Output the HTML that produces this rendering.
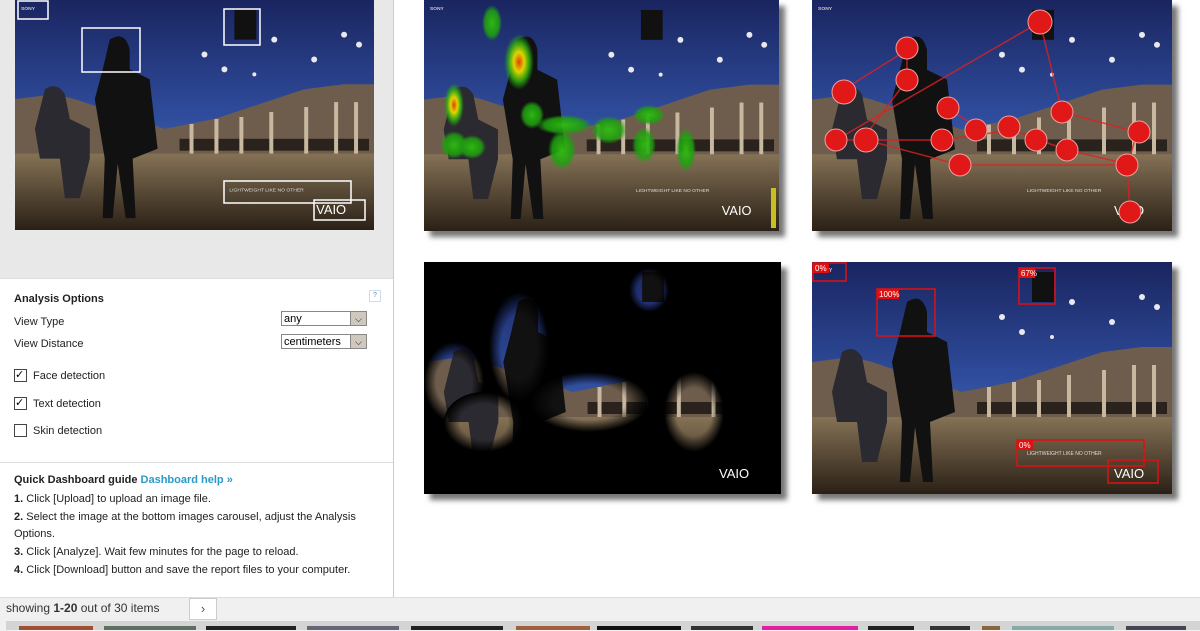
<!DOCTYPE html>
<html><head><style>
body{margin:0;width:1200px;height:630px;overflow:hidden;background:#fff;font-family:"Liberation Sans",Arial,sans-serif;position:relative}
.abs{position:absolute}
.ph{position:absolute;display:block}
.sh{box-shadow:6px 6px 5px #777}
.t{font-size:11px;color:#222}
</style></head><body>
<svg width="0" height="0" style="position:absolute">
<defs>
<linearGradient id="sky" x1="0" y1="0" x2="0" y2="1"><stop offset="0" stop-color="#1a2560"/><stop offset=".5" stop-color="#2f4c9c"/><stop offset="1" stop-color="#5a7dc0"/></linearGradient>
<linearGradient id="gr" x1="0" y1="0" x2="0" y2="1"><stop offset="0" stop-color="#857256"/><stop offset="1" stop-color="#2a2016"/></linearGradient>
<symbol id="photo" viewBox="0 0 360 232" preserveAspectRatio="none">
<rect width="360" height="232" fill="url(#sky)"/>
<path d="M0 100 L40 95 L60 100 L150 130 L200 120 L290 90 L330 85 L360 85 L360 160 L0 160Z" fill="#6e5d4c"/>
<g fill="#2a221c"><rect x="165" y="140" width="190" height="12"/></g>
<g fill="#c8b8a0"><rect x="175" y="125" width="4" height="30"/><rect x="200" y="120" width="4" height="35"/><rect x="225" y="118" width="4" height="37"/><rect x="255" y="113" width="4" height="42"/><rect x="290" y="108" width="4" height="47"/><rect x="320" y="103" width="4" height="52"/><rect x="340" y="103" width="4" height="52"/></g>
<rect y="155" width="360" height="77" fill="url(#gr)"/>
<path d="M30 90 q12-8 20 5 l5 25 l20 10 l0 30 l-10 40 l-15 0 l-5-40 l-20 0 l-5 -30 z" fill="#2a2a30"/>
<path d="M95 40 q15-10 20 10 l0 20 l20 10 l8 70 l-25 10 l3 60 l-10 0 l-8-55 l-5 55 l-10 0 l2-60 l-10-60 l8-30z" fill="#111"/>
<g fill="#e8e8ee"><circle cx="190" cy="55" r="3"/><circle cx="210" cy="70" r="3"/><circle cx="260" cy="40" r="3"/><circle cx="300" cy="60" r="3"/><circle cx="330" cy="35" r="3"/><circle cx="240" cy="75" r="2"/><circle cx="345" cy="45" r="3"/></g>
<rect x="220" y="10" width="22" height="30" fill="#111"/>
<text x="302" y="216" fill="#fff" font-size="13" font-family="Liberation Sans">VAIO</text>
<text x="215" y="193" fill="#ddd" font-size="5" font-family="Liberation Sans">LIGHTWEIGHT LIKE NO OTHER</text>
<text x="6" y="10" fill="#ccc" font-size="5" font-family="Liberation Sans" font-weight="bold">SONY</text>
</symbol>
<radialGradient id="hot"><stop offset="0" stop-color="#f04000"/><stop offset=".35" stop-color="#e8e000"/><stop offset=".7" stop-color="#30b010" stop-opacity=".9"/><stop offset="1" stop-color="#20a010" stop-opacity="0"/></radialGradient>
<radialGradient id="grn"><stop offset="0" stop-color="#30c010"/><stop offset=".7" stop-color="#20a010" stop-opacity=".9"/><stop offset="1" stop-color="#20a010" stop-opacity="0"/></radialGradient>
<radialGradient id="hole"><stop offset="0" stop-color="#000"/><stop offset=".6" stop-color="#000"/><stop offset="1" stop-color="#fff"/></radialGradient>
<mask id="m"><rect width="357" height="232" fill="#fff"/><g fill="url(#hole)"><ellipse cx="95" cy="85" rx="30" ry="55"/><ellipse cx="30" cy="120" rx="30" ry="40"/><ellipse cx="225" cy="28" rx="20" ry="22"/><ellipse cx="165" cy="140" rx="60" ry="30"/><ellipse cx="270" cy="150" rx="30" ry="40"/><ellipse cx="60" cy="160" rx="40" ry="30"/></g></mask>
</defs></svg>

<!-- left panel -->
<div class="abs" style="left:0;top:0;width:393px;height:278px;background:#e8e8e8"></div>
<svg class="ph" style="left:15px;top:0" width="359" height="230"><use href="#photo"/>
<g fill="none" stroke="#fff" stroke-width="1.5"><rect x="3" y="1" width="30" height="18"/><rect x="67" y="28" width="58" height="44"/><rect x="209" y="9" width="36" height="36"/><rect x="209" y="181" width="127" height="22"/><rect x="299" y="200" width="51" height="20"/></g></svg>
<div class="abs" style="left:393px;top:0;width:1px;height:597px;background:#ccc"></div>
<div class="abs" style="left:0;top:278px;width:393px;height:1px;background:#ddd"></div>
<div class="abs" style="left:14px;top:293px;font-size:11px;font-weight:bold;color:#222">Analysis Options</div>
<div class="abs" style="left:369px;top:290px;width:10px;height:10px;border:1px solid #cde;font-size:7px;color:#58a;text-align:center;line-height:10px">?</div>
<div class="abs t" style="left:14px;top:316px">View Type</div>
<div class="abs t" style="left:14px;top:338px">View Distance</div>
<div class="abs" style="left:281px;top:311px;width:86px;height:15px;border:1px solid #888;font-size:11px;line-height:15px;padding-left:2px;box-sizing:border-box">any<span class="abs" style="right:0;top:0;width:15px;height:13px;background:#cfc8be;border-left:1px solid #888;text-align:center;font-size:9px">⌵</span></div>
<div class="abs" style="left:281px;top:334px;width:86px;height:15px;border:1px solid #888;font-size:11px;line-height:14px;padding-left:2px;box-sizing:border-box">centimeters<span class="abs" style="right:0;top:0;width:15px;height:13px;background:#cfc8be;border-left:1px solid #888;text-align:center;font-size:9px">⌵</span></div>
<div class="abs" style="left:14px;top:369px;width:11px;height:11px;border:1px solid #444;font-size:11px;line-height:10px">✓</div>
<div class="abs t" style="left:33px;top:370px">Face detection</div>
<div class="abs" style="left:14px;top:397px;width:11px;height:11px;border:1px solid #444;font-size:11px;line-height:10px">✓</div>
<div class="abs t" style="left:33px;top:398px">Text detection</div>
<div class="abs" style="left:14px;top:424px;width:11px;height:11px;border:1px solid #444"></div>
<div class="abs t" style="left:33px;top:425px">Skin detection</div>
<div class="abs" style="left:0;top:462px;width:393px;height:1px;background:#ddd"></div>
<div class="abs" style="left:14px;top:474px;font-size:11px;font-weight:bold;color:#222">Quick Dashboard guide <span style="color:#2a9ac8">Dashboard help »</span></div>
<div class="abs t" style="left:14px;top:491px;width:370px;line-height:17.7px"><b>1.</b> Click [Upload] to upload an image file.<br><b>2.</b> Select the image at the bottom images carousel, adjust the Analysis Options.<br><b>3.</b> Click [Analyze]. Wait few minutes for the page to reload.<br><b>4.</b> Click [Download] button and save the report files to your computer.</div>

<!-- heatmap -->
<svg class="ph sh" style="left:424px;top:0" width="355" height="231"><use href="#photo"/>
<g opacity=".95"><ellipse cx="95" cy="62" rx="15" ry="28" fill="url(#hot)"/><ellipse cx="30" cy="105" rx="10" ry="22" fill="url(#hot)"/><ellipse cx="30" cy="145" rx="14" ry="14" fill="url(#grn)"/><ellipse cx="68" cy="23" rx="10" ry="18" fill="url(#grn)"/>
<ellipse cx="108" cy="115" rx="12" ry="14" fill="url(#grn)"/><ellipse cx="140" cy="125" rx="28" ry="10" fill="url(#grn)"/><ellipse cx="185" cy="130" rx="18" ry="14" fill="url(#grn)"/><ellipse cx="138" cy="150" rx="14" ry="20" fill="url(#grn)"/><ellipse cx="48" cy="147" rx="14" ry="12" fill="url(#grn)"/><ellipse cx="220" cy="145" rx="12" ry="18" fill="url(#grn)"/><ellipse cx="225" cy="115" rx="16" ry="10" fill="url(#grn)"/><ellipse cx="262" cy="150" rx="10" ry="22" fill="url(#grn)"/></g>
<rect x="347" y="188" width="5" height="40" fill="#c8c020"/></svg>

<!-- gaze plot -->
<svg class="ph sh" style="left:812px;top:0" width="360" height="231"><use href="#photo"/>
<g stroke="#e02020" stroke-width="1.5" fill="none" opacity=".8"><polyline points="28,92 95,50 95,80 50,140 24,140 228,22 250,112 325,132 315,168 318,210"/><polyline points="54,140 148,165 315,165"/><polyline points="54,140 130,140 200,130 255,150 320,165"/><polyline points="138,110 170,130"/></g>
<g fill="#e01818" stroke="#f0a0a0" stroke-width="1"><circle cx="95" cy="48" r="11"/><circle cx="95" cy="80" r="11"/><circle cx="228" cy="22" r="12"/><circle cx="32" cy="92" r="12"/><circle cx="24" cy="140" r="11"/><circle cx="54" cy="140" r="12"/><circle cx="136" cy="108" r="11"/><circle cx="130" cy="140" r="11"/><circle cx="164" cy="130" r="11"/><circle cx="197" cy="127" r="11"/><circle cx="250" cy="112" r="11"/><circle cx="224" cy="140" r="11"/><circle cx="255" cy="150" r="11"/><circle cx="148" cy="165" r="11"/><circle cx="327" cy="132" r="11"/><circle cx="315" cy="165" r="11"/><circle cx="318" cy="212" r="11"/></g></svg>

<!-- fog -->
<svg class="ph sh" style="left:424px;top:262px" width="357" height="232"><use href="#photo"/>
<rect width="357" height="232" fill="#000" mask="url(#m)"/>
<text x="295" y="216" fill="#fff" font-size="13" font-family="Liberation Sans">VAIO</text></svg>

<!-- boxes -->
<svg class="ph sh" style="left:812px;top:262px" width="360" height="232"><use href="#photo"/>
<g fill="none" stroke="#e01010" stroke-width="1.5"><rect x="1" y="1" width="33" height="18"/><rect x="65" y="27" width="58" height="47"/><rect x="207" y="6" width="36" height="36"/><rect x="205" y="178" width="127" height="26"/><rect x="296" y="198" width="50" height="23"/></g>
<g fill="#e01010"><rect x="1" y="1" width="16" height="10"/><rect x="65" y="27" width="22" height="10"/><rect x="207" y="6" width="16" height="10"/><rect x="205" y="178" width="16" height="10"/></g>
<g fill="#fff" font-size="8" font-family="Liberation Sans"><text x="3" y="9">0%</text><text x="67" y="35">100%</text><text x="209" y="14">67%</text><text x="207" y="186">0%</text></g></svg>

<!-- bottom -->
<div class="abs" style="left:0;top:597px;width:1200px;height:33px;background:#f0f0f0;border-top:1px solid #ddd"></div>
<div class="abs" style="left:6px;top:601px;font-size:12px;color:#333">showing <b>1-20</b> out of 30 items</div>
<div class="abs" style="left:189px;top:598px;width:26px;height:20px;border:1px solid #ccc;background:#fff;text-align:center;font-size:13px;line-height:20px;color:#555">›</div>
<div class="abs" style="left:6px;top:621px;width:1194px;height:9px;background:#d4d4d4"></div>
<div class="abs" style="top:626px;left:0;width:1200px;height:4px">
<div class="abs" style="left:19px;width:74px;height:4px;background:#a05030"></div>
<div class="abs" style="left:104px;width:92px;height:4px;background:#607060"></div>
<div class="abs" style="left:206px;width:90px;height:4px;background:#222"></div>
<div class="abs" style="left:307px;width:92px;height:4px;background:#667"></div>
<div class="abs" style="left:411px;width:92px;height:4px;background:#222"></div>
<div class="abs" style="left:516px;width:74px;height:4px;background:#a06040"></div>
<div class="abs" style="left:597px;width:84px;height:4px;background:#111"></div>
<div class="abs" style="left:691px;width:62px;height:4px;background:#333"></div>
<div class="abs" style="left:762px;width:96px;height:4px;background:#e020a0"></div>
<div class="abs" style="left:868px;width:46px;height:4px;background:#222"></div>
<div class="abs" style="left:930px;width:40px;height:4px;background:#333"></div>
<div class="abs" style="left:982px;width:18px;height:4px;background:#864"></div>
<div class="abs" style="left:1012px;width:102px;height:4px;background:#8aa"></div>
<div class="abs" style="left:1126px;width:60px;height:4px;background:#445"></div>
</div>
</body></html>
